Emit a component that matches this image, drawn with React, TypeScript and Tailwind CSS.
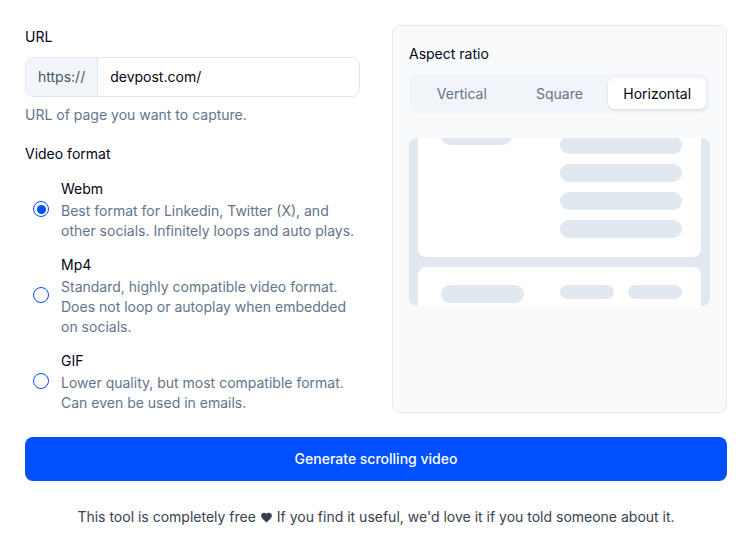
import React from 'react';

const formats = [
  {
    id: 'webm',
    title: 'Webm',
    desc: 'Best format for Linkedin, Twitter (X), and other socials. Infinitely loops and auto plays.',
  },
  {
    id: 'mp4',
    title: 'Mp4',
    desc: 'Standard, highly compatible video format. Does not loop or autoplay when embedded on socials.',
  },
  {
    id: 'gif',
    title: 'GIF',
    desc: 'Lower quality, but most compatible format. Can even be used in emails.',
  },
];

const Radio: React.FC<{ checked: boolean }> = ({ checked }) => (
  <span className="w-4 h-4 shrink-0 rounded-full border-[1.5px] border-[#0050ff] bg-white flex items-center justify-center">
    {checked && <span className="w-[9px] h-[9px] rounded-full bg-[#0050ff]" />}
  </span>
);

const Bar: React.FC<{ className: string }> = ({ className }) => (
  <div className={`rounded-full bg-[#e2e8f0] ${className}`} />
);

const App: React.FC = () => {
  const selected = 'webm';
  const ratios = ['Vertical', 'Square', 'Horizontal'];
  const active = 'Horizontal';

  return (
    <div className="w-[752px] min-h-[552px] bg-white px-[25px] pt-[25px] font-['Inter',sans-serif] text-[#020617]">
      <div className="grid grid-cols-2 gap-8">
        {/* Left column */}
        <div className="flex flex-col">
          <label className="text-sm leading-6 mb-2">URL</label>
          <div className="flex h-10 rounded-lg border border-[#e2e8f0] overflow-hidden text-sm">
            <span className="flex items-center px-3 bg-[#f1f5f9] border-r border-[#e2e8f0] text-[#475569]">
              https://
            </span>
            <span className="flex items-center pl-3 text-[#020617]">devpost.com/</span>
          </div>
          <p className="mt-2 text-sm leading-5 text-[#64748b]">URL of page you want to capture.</p>

          <h3 className="mt-[17px] text-sm leading-6">Video format</h3>
          <div className="mt-[11px] flex flex-col gap-3">
            {formats.map((f) => (
              <div key={f.id} className="flex items-center gap-3 pl-2">
                <Radio checked={f.id === selected} />
                <div className="text-sm">
                  <div className="leading-6 text-[#020617]">{f.title}</div>
                  <div className="leading-5 text-[#64748b] pr-1">{f.desc}</div>
                </div>
              </div>
            ))}
          </div>
        </div>

        {/* Right column */}
        <div className="rounded-lg border border-[#e5e7eb] bg-[#f8fafc] p-4">
          <h3 className="text-sm leading-6 mb-2">Aspect ratio</h3>
          <div className="grid grid-cols-3 rounded-lg bg-[#f1f5f9] p-1">
            {ratios.map((r) => (
              <div
                key={r}
                className={
                  r === active
                    ? 'h-[31px] flex items-center justify-center rounded-md bg-white text-sm text-[#020617] shadow-sm'
                    : 'h-[31px] flex items-center justify-center text-sm text-[#64748b]'
                }
              >
                {r}
              </div>
            ))}
          </div>

          {/* Preview */}
          <div className="mt-[25px] h-[168px] overflow-hidden rounded-lg bg-[#e2e8f0] px-[9px]">
            <div className="-mt-[20px] rounded-lg bg-white pt-[9px] pb-[19px] pl-[23px] pr-[19px] flex justify-between">
              <Bar className="w-[71px] h-[18px]" />
              <div className="pt-[9px] flex flex-col gap-[10px]">
                <Bar className="w-[122px] h-[18px]" />
                <Bar className="w-[122px] h-[18px]" />
                <Bar className="w-[122px] h-[18px]" />
                <Bar className="w-[122px] h-[18px]" />
              </div>
            </div>
            <div className="mt-[10px] rounded-lg bg-white pt-[18px] pb-[18px] pl-[23px] pr-[19px] flex justify-between">
              <Bar className="w-[83px] h-[18px]" />
              <div className="flex gap-[14px]">
                <Bar className="w-[54px] h-[14px]" />
                <Bar className="w-[54px] h-[14px]" />
              </div>
            </div>
          </div>
        </div>
      </div>

      <button className="mt-6 w-full h-11 rounded-lg bg-[#0050ff] text-white text-sm font-medium">
        Generate scrolling video
      </button>

      <p className="mt-[26px] text-center text-sm leading-5 text-[#374151]">
        This tool is completely free{' '}
        <svg viewBox="0 0 24 24" className="inline-block w-[13px] h-[13px] -mt-[2px] fill-[#374151]">
          <path d="M12 21.35l-1.45-1.32C5.4 15.36 2 12.28 2 8.5 2 5.42 4.42 3 7.5 3c1.74 0 3.41.81 4.5 2.09C13.09 3.81 14.76 3 16.5 3 19.58 3 22 5.42 22 8.5c0 3.78-3.4 6.86-8.55 11.54L12 21.35z" />
        </svg>{' '}
        If you find it useful, we'd love it if you told someone about it.
      </p>
    </div>
  );
};

export default App;
